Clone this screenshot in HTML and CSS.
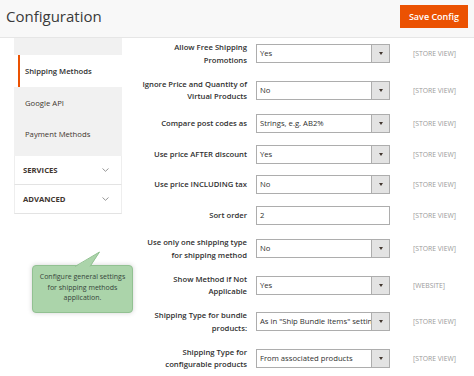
FILE: index.html
```html
<!DOCTYPE html>
<html lang="en">
<head>
<meta charset="utf-8">
<title>Configuration</title>
<link rel="stylesheet" href="styles.css">
</head>
<body>
<div class="page">
  <header class="header">
    <h1 class="title">Configuration</h1>
    <button class="save">Save Config</button>
  </header>
  <main class="main">
    <aside class="sidebar">
      <ul class="tabs">
        <li class="tab tab-cut"></li>
        <li class="tab active">Shipping Methods</li>
        <li class="tab tab-2">Google API</li>
        <li class="tab">Payment Methods</li>
      </ul>
      <div class="group">
        <span>SERVICES</span>
        <svg class="chev" width="7" height="4" viewBox="0 0 7 4"><polyline points="0.5,0.5 3.5,3.3 6.5,0.5" fill="none" stroke="#8a8a8a" stroke-width="0.9"/></svg>
      </div>
      <div class="group">
        <span>ADVANCED</span>
        <svg class="chev" width="7" height="4" viewBox="0 0 7 4"><polyline points="0.5,0.5 3.5,3.3 6.5,0.5" fill="none" stroke="#8a8a8a" stroke-width="0.9"/></svg>
      </div>
    </aside>

    <section class="form">
      <div class="label">Allow Free Shipping<br>Promotions</div>
      <div class="select"><span class="val">Yes</span><span class="arrow"></span></div>
      <div class="scope">[STORE VIEW]</div>

      <div class="label">Ignore Price and Quantity of<br>Virtual Products</div>
      <div class="select"><span class="val">No</span><span class="arrow"></span></div>
      <div class="scope">[STORE VIEW]</div>

      <div class="label">Compare post codes as</div>
      <div class="select"><span class="val">Strings, e.g. AB2%</span><span class="arrow"></span></div>
      <div class="scope">[STORE VIEW]</div>

      <div class="label">Use price AFTER discount</div>
      <div class="select"><span class="val">Yes</span><span class="arrow"></span></div>
      <div class="scope">[STORE VIEW]</div>

      <div class="label">Use price INCLUDING tax</div>
      <div class="select"><span class="val">No</span><span class="arrow"></span></div>
      <div class="scope">[STORE VIEW]</div>

      <div class="label">Sort order</div>
      <div class="select input"><span class="val">2</span></div>
      <div class="scope">[STORE VIEW]</div>

      <div class="label">Use only one shipping type<br>for shipping method</div>
      <div class="select"><span class="val">No</span><span class="arrow"></span></div>
      <div class="scope">[STORE VIEW]</div>

      <div class="label">Show Method if Not<br>Applicable</div>
      <div class="select"><span class="val">Yes</span><span class="arrow"></span></div>
      <div class="scope">[WEBSITE]</div>

      <div class="label">Shipping Type for bundle<br>products:</div>
      <div class="select"><span class="val">As in "Ship Bundle Items" setting</span><span class="arrow"></span></div>
      <div class="scope">[STORE VIEW]</div>

      <div class="label">Shipping Type for<br>configurable products</div>
      <div class="select"><span class="val">From associated products</span><span class="arrow"></span></div>
      <div class="scope">[STORE VIEW]</div>
    </section>

    <div class="tip">
      <svg class="tail" width="30" height="16" viewBox="0 0 30 16">
        <polygon points="2,16 17,16 26.5,1" fill="#abd4aa"/>
        <polyline points="2,15.5 26.5,1 17,15.5" fill="none" stroke="#92c192" stroke-width="1"/>
      </svg>
      Configure general settings<br>for shipping methods<br>application.
    </div>
  </main>
</div>
</body>
</html>
```

FILE: styles.css
```css
* { box-sizing: border-box; }

html, body {
  margin: 0;
  padding: 0;
  background: #ffffff;
}

body {
  font-family: "Open Sans", "Liberation Sans", sans-serif;
  color: #303030;
  width: 474px;
  height: 376px;
  overflow: hidden;
}

.header {
  height: 38px;
  background: #f8f8f8;
  border-bottom: 1px solid #e6e6e6;
  display: flex;
  align-items: flex-start;
  justify-content: space-between;
  padding: 5px 6px 0 6px;
}

.title {
  margin: 0;
  font-size: 15px;
  font-weight: 400;
  line-height: 23px;
  color: #3a3a3a;
  letter-spacing: 0;
}

.save {
  width: 68px;
  height: 23px;
  border: none;
  background: #eb5202;
  color: #ffffff;
  font-family: "Open Sans", "Liberation Sans", sans-serif;
  font-weight: 600;
  font-size: 9px;
  padding: 0;
  margin: 0;
}

.main {
  position: relative;
  display: flex;
  align-items: flex-start;
}

.sidebar {
  margin-left: 14px;
  width: 108px;
  flex: none;
}

.tabs {
  list-style: none;
  margin: 0;
  padding: 0 0 6px 0;
  background: #f1f1f1;
}

.tab {
  height: 32px;
  display: flex;
  align-items: center;
  padding-left: 11px;
  font-size: 7.7px;
  color: #41362f;
  position: relative;
}

.tab-cut { height: 17px; }
.tab-2 { height: 31px; }

.tab.active {
  background: #ffffff;
  font-weight: 600;
  color: #303030;
}

.tab.active::before {
  content: "";
  position: absolute;
  left: 4px;
  top: 0;
  bottom: 0;
  width: 2px;
  background: #eb5202;
}

.group {
  height: 29px;
  display: flex;
  align-items: center;
  justify-content: space-between;
  padding: 0 12px 0 8px;
  border-left: 1px solid #eeeeee;
  border-right: 1px solid #eeeeee;
  border-bottom: 1px solid #e3e3e3;
  font-size: 7.7px;
  font-weight: 700;
  color: #41362f;
}

.chev { display: block; }

.form {
  flex: 1;
  display: grid;
  grid-template-columns: 125px 134px auto;
  column-gap: 9px;
  row-gap: 11.5px;
  align-items: center;
  padding-top: 3px;
}

.label {
  text-align: right;
  font-size: 7.7px;
  font-weight: 600;
  line-height: 12.5px;
  white-space: nowrap;
  color: #303030;
}

.select {
  height: 19px;
  border: 1px solid #adadad;
  background: #ffffff;
  display: flex;
  align-items: stretch;
}

.val {
  flex: 1;
  min-width: 0;
  overflow: hidden;
  white-space: nowrap;
  font-size: 7.7px;
  line-height: 17px;
  padding-left: 3px;
  color: #303030;
}

.arrow {
  width: 18px;
  flex: none;
  background: #e3e3e3;
  border-left: 1px solid #adadad;
  display: flex;
  align-items: center;
  justify-content: center;
}

.arrow::after {
  content: "";
  width: 0;
  height: 0;
  border-left: 2.5px solid transparent;
  border-right: 2.5px solid transparent;
  border-top: 3px solid #41362f;
}

.scope {
  padding-left: 14px;
  font-size: 6.8px;
  color: #9a9a9a;
  white-space: nowrap;
}

.tip {
  position: absolute;
  left: 32px;
  top: 227px;
  width: 101px;
  height: 48px;
  background: #abd4aa;
  border: 1px solid #92c192;
  border-radius: 4px;
  box-shadow: 0 0 5px rgba(0, 0, 0, 0.18);
  text-align: center;
  font-size: 7px;
  line-height: 10.5px;
  color: #36453a;
  padding-top: 6px;
}

.tail {
  position: absolute;
  left: 40px;
  top: -15px;
}
```
